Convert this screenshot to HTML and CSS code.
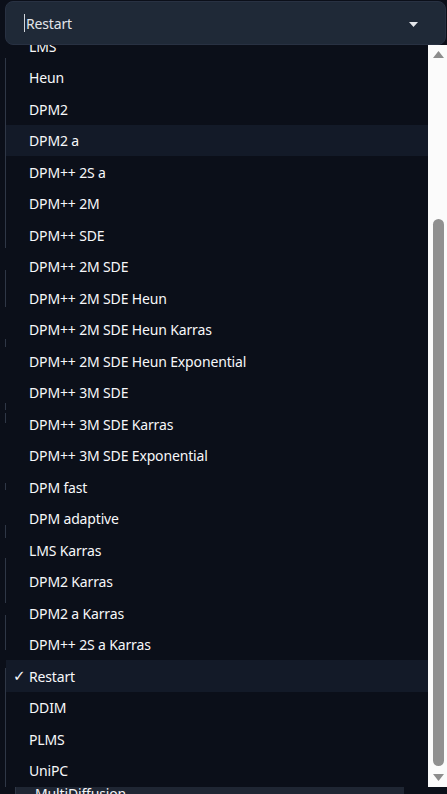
FILE: index.html
```html
<!DOCTYPE html>
<html>
<head>
<meta charset="utf-8">
<link rel="stylesheet" href="styles.css">
</head>
<body>
<div class="field">
  <div class="value"><span class="caret"></span>Restart</div>
  <svg class="arrow" width="9" height="5" viewBox="0 0 9 5"><polygon points="0,0 9,0 4.5,5" fill="#e5e7eb"/></svg>
</div>
<div class="popup">
  <div class="gutter"></div>
  <div class="list">
    <div class="items">
      <div class="opt"><span class="check"></span>LMS</div>
      <div class="opt"><span class="check"></span>Heun</div>
      <div class="opt"><span class="check"></span>DPM2</div>
      <div class="opt hover"><span class="check"></span>DPM2 a</div>
      <div class="opt"><span class="check"></span>DPM++ 2S a</div>
      <div class="opt"><span class="check"></span>DPM++ 2M</div>
      <div class="opt"><span class="check"></span>DPM++ SDE</div>
      <div class="opt"><span class="check"></span>DPM++ 2M SDE</div>
      <div class="opt"><span class="check"></span>DPM++ 2M SDE Heun</div>
      <div class="opt"><span class="check"></span>DPM++ 2M SDE Heun Karras</div>
      <div class="opt"><span class="check"></span>DPM++ 2M SDE Heun Exponential</div>
      <div class="opt"><span class="check"></span>DPM++ 3M SDE</div>
      <div class="opt"><span class="check"></span>DPM++ 3M SDE Karras</div>
      <div class="opt"><span class="check"></span>DPM++ 3M SDE Exponential</div>
      <div class="opt"><span class="check"></span>DPM fast</div>
      <div class="opt"><span class="check"></span>DPM adaptive</div>
      <div class="opt"><span class="check"></span>LMS Karras</div>
      <div class="opt"><span class="check"></span>DPM2 Karras</div>
      <div class="opt"><span class="check"></span>DPM2 a Karras</div>
      <div class="opt"><span class="check"></span>DPM++ 2S a Karras</div>
      <div class="opt selected"><span class="check">✓</span>Restart</div>
      <div class="opt"><span class="check"></span>DDIM</div>
      <div class="opt"><span class="check"></span>PLMS</div>
      <div class="opt"><span class="check"></span>UniPC</div>
    </div>
  </div>
  <div class="scrollbar">
    <svg class="sb-arrow" width="19" height="9" viewBox="0 0 19 9"><polygon points="10.5,1 16,8 5,8" fill="#8c8c8c"/></svg>
    <div class="thumb"></div>
    <svg class="sb-arrow down" width="19" height="9" viewBox="0 0 19 9"><polygon points="5,1 16,1 10.5,8" fill="#8c8c8c"/></svg>
  </div>
</div>
<div class="next">MultiDiffusion</div>
</body>
</html>
```
FILE: styles.css
```css
html, body {
  margin: 0;
  padding: 0;
}
body {
  background: #0b0f19;
  font-family: "Noto Sans", "Liberation Sans", Arial, sans-serif;
  font-size: 14px;
  letter-spacing: -0.15px;
  color: #f7f8fa;
  height: 794px;
  overflow: hidden;
}
.field {
  box-sizing: border-box;
  margin: 1px 1px 0 5px;
  height: 44px;
  background: #1f2937;
  border: 1px solid #283142;
  border-radius: 8px;
  display: flex;
  align-items: center;
  justify-content: space-between;
  padding: 0 27px 0 18px;
}
.value {
  display: flex;
  align-items: center;
  color: #e2e5ea;
}
.caret {
  display: inline-block;
  width: 1px;
  height: 18px;
  background: #d1d5db;
  margin-right: 1px;
}
.arrow {
  display: block;
  margin-top: 2px;
}
.popup {
  display: flex;
  height: 742px;
  overflow: hidden;
}
.gutter {
  width: 6px;
  flex: none;
  background-image: linear-gradient(to bottom,
    transparent 0 13px, #2f3746 13px 203px,
    transparent 203px 225px, #2f3746 225px 262px,
    transparent 262px 294px, #2f3746 294px 302px,
    transparent 302px 358px, #2f3746 358px 365px,
    transparent 365px 368px, #2f3746 368px 378px,
    transparent 378px 438px, #2f3746 438px 445px,
    transparent 445px 480px, #2f3746 480px 493px,
    transparent 493px 513px, #2f3746 513px 558px,
    transparent 558px 570px, #2f3746 570px 605px,
    transparent 605px 623px, #2f3746 623px 742px);
  background-repeat: no-repeat;
  background-position: 5px 0;
  background-size: 1px 100%;
}
.list {
  flex: 1;
  overflow: hidden;
  background: #0b0f19;
}
.items {
  margin-top: -14.75px;
}
.opt {
  height: 31.5px;
  display: flex;
  align-items: center;
  padding-left: 7px;
  white-space: nowrap;
}
.opt.hover,
.opt.selected {
  background: #131a28;
}
.check {
  width: 16px;
  flex: none;
  font-family: "DejaVu Sans", sans-serif;
  font-size: 15px;
  letter-spacing: 0;
}
.scrollbar {
  width: 19px;
  flex: none;
  background: #fbfbfb;
  display: flex;
  flex-direction: column;
  padding-top: 5px;
}
.sb-arrow {
  display: block;
  flex: none;
}
.thumb {
  margin: 160px 0 0 5px;
  width: 11px;
  height: 547px;
  border-radius: 6px;
  background: #909090;
  flex: none;
}
.sb-arrow.down {
  margin-top: 7px;
}
.next {
  box-sizing: border-box;
  margin-left: 15px;
  width: 389px;
  height: 7px;
  overflow: hidden;
  background: #1f2633;
  border-left: 1px solid #2f3746;
  padding-left: 19px;
  line-height: 14px;
  color: #f3f4f6;
}
```
